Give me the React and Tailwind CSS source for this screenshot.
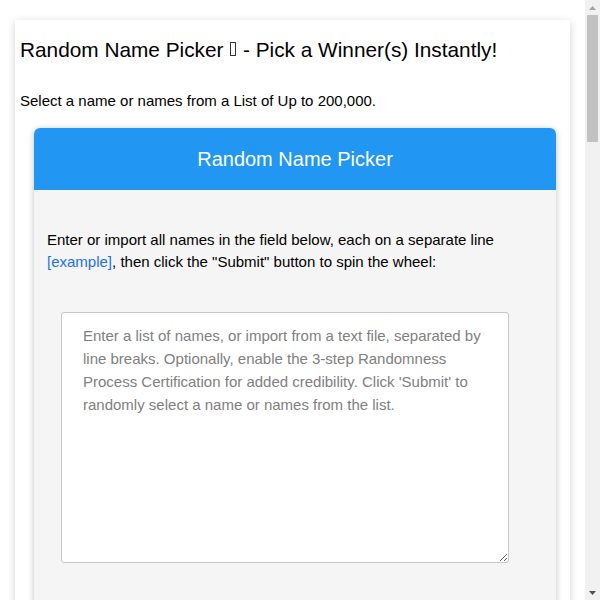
export default function App() {
  return (
    <div className="flex h-[600px] overflow-hidden bg-white font-['Liberation_Sans',Arial,sans-serif] text-black">
      {/* page */}
      <div className="w-[585px] h-[600px] overflow-hidden">
        <div className="pt-5 px-[15px]">
          <div className="w-[555px] min-h-[2660px] bg-white shadow-[0_2px_8px_rgba(0,0,0,0.18)] px-[5px] pt-[18px]">
            {/* heading; the missing-glyph box is drawn as a bordered span */}
            <h1 className="text-[20.8px] leading-[24px] font-normal whitespace-nowrap">
              Random Name Picker{" "}
              <span className="inline-block ml-[1px] mr-[1px] w-[6px] h-[14px] border border-[#333] align-[1px]" />{" "}
              - Pick a Winner(s) Instantly!
            </h1>
            <p className="mt-[28px] text-[15px] leading-[22px]">
              Select a name or names from a List of Up to 200,000.
            </p>

            {/* picker card */}
            <div className="mt-[16px] ml-[14px] w-[522px] rounded-md overflow-hidden shadow-[0_1px_6px_rgba(0,0,0,0.25)] bg-[#f5f5f5] min-h-[900px]">
              <div className="h-[62px] bg-[#2196f3] flex items-center justify-center">
                <h2 className="text-white text-[20px] leading-[24px] font-normal">Random Name Picker</h2>
              </div>
              <div className="pt-[39px] px-[13px]">
                <p className="text-[15px] leading-[22px]">
                  Enter or import all names in the field below, each on a separate line{" "}
                  <a href="#" className="text-[#1a73e8]">[example]</a>, then click the "Submit" button to spin the wheel:
                </p>
                <div className="mt-[39px] pl-[14px]">
                  <textarea
                    className="block w-[448px] h-[251px] bg-white border border-[#c8c8c8] rounded-[3px] pl-[21px] pr-[12px] pt-[11px] text-[15px] leading-[23px] text-[#333] placeholder:text-[#808080] outline-none"
                    placeholder="Enter a list of names, or import from a text file, separated by line breaks. Optionally, enable the 3-step Randomness Process Certification for added credibility. Click 'Submit' to randomly select a name or names from the list."
                  />
                </div>
              </div>
            </div>
          </div>
        </div>
      </div>

      {/* scrollbar */}
      <div className="w-[15px] h-[600px] bg-[#f1f1f1] flex flex-col items-center">
        <div className="h-[15px] flex items-center justify-center">
          <svg width="7" height="4" viewBox="0 0 7 4"><path d="M3.5 0L7 4H0z" fill="#a3a3a3" /></svg>
        </div>
        <div className="w-[11px] h-[127px] bg-[#c1c1c1]" />
        <div className="flex-1" />
        <div className="h-[15px] flex items-center justify-center">
          <svg width="7" height="4" viewBox="0 0 7 4"><path d="M0 0H7L3.5 4z" fill="#505050" /></svg>
        </div>
      </div>
    </div>
  );
}
